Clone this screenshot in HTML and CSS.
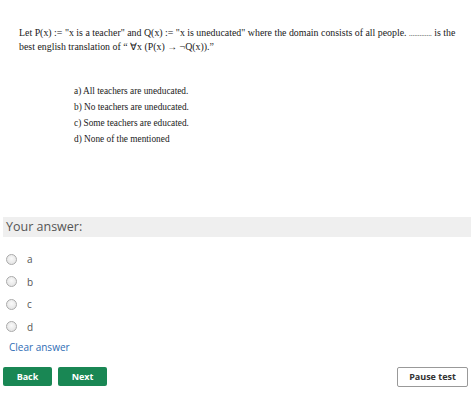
FILE: index.html
```html
<!DOCTYPE html>
<html>
<head>
<meta charset="utf-8">
<link rel="stylesheet" href="styles.css">
</head>
<body>
<div class="card">
  <div class="question">
    <p class="qtext">Let P(x) := "x is a teacher" and Q(x) := "x is uneducated" where the domain consists of all people. <span class="blank">.............</span> is the best english translation of “ ∀x (P(x) → ¬Q(x)).”</p>
    <ul class="choices">
      <li>a) All teachers are uneducated.</li>
      <li>b) No teachers are uneducated.</li>
      <li>c) Some teachers are educated.</li>
      <li>d) None of the mentioned</li>
    </ul>
  </div>
  <div class="answer-head">Your answer:</div>
  <div class="options">
    <label class="opt"><span class="radio"></span><span class="lbl">a</span></label>
    <label class="opt"><span class="radio"></span><span class="lbl">b</span></label>
    <label class="opt"><span class="radio"></span><span class="lbl">c</span></label>
    <label class="opt"><span class="radio"></span><span class="lbl">d</span></label>
  </div>
  <a class="clear">Clear answer</a>
  <div class="actions">
    <div class="left">
      <button class="btn green">Back</button>
      <button class="btn green">Next</button>
    </div>
    <button class="btn outline">Pause test</button>
  </div>
</div>
</body>
</html>
```
FILE: styles.css
```css
html, body {
  margin: 0;
  padding: 0;
  background: #ffffff;
}
body {
  font-family: "Open Sans", sans-serif;
}
.card {
  width: 474px;
  height: 405px;
  box-sizing: border-box;
  padding: 0 3px;
  box-shadow: 0 2px 3px rgba(0,0,0,0.12);
}
.question {
  padding: 26px 0 0 16px;
  height: 191px;
  box-sizing: border-box;
}
.qtext {
  margin: 0;
  font-family: "Liberation Serif", serif;
  font-size: 9.9px;
  line-height: 14px;
  color: #1a1a1a;
}
.blank {
  font-size: 7px;
  line-height: 1;
}
.choices {
  list-style: none;
  margin: 29px 0 0 55px;
  padding: 0;
  font-family: "Liberation Serif", serif;
  font-size: 9.3px;
  line-height: 16px;
  color: #1a1a1a;
}
.answer-head {
  margin-top: 26px;
  height: 20px;
  background: #efefef;
  font-size: 12.5px;
  line-height: 20px;
  color: #555;
  padding-left: 3px;
}
.options {
  margin-top: 17px;
  display: flex;
  flex-direction: column;
  gap: 12.5px;
}
.opt {
  display: flex;
  align-items: center;
  height: 10px;
  font-size: 10px;
  color: #555;
}
.radio {
  width: 9px;
  height: 9px;
  border: 1px solid #aaa;
  border-radius: 50%;
  background: radial-gradient(circle at 50% 40%, #fafafa, #dedede);
  margin-left: 3px;
  margin-right: 10px;
}
.clear {
  display: block;
  margin-top: 8px;
  margin-left: 6px;
  font-size: 10px;
  color: #2f6db5;
}
.actions {
  margin-top: 13px;
  display: flex;
  justify-content: space-between;
  padding-right: 3px;
}
.left {
  display: flex;
  gap: 6px;
}
.btn {
  font-family: "Open Sans", sans-serif;
  font-weight: bold;
  font-size: 9px;
  height: 19px;
  border-radius: 2px;
  padding: 0;
  cursor: pointer;
}
.green {
  width: 49px;
  background: #198754;
  color: #fff;
  border: none;
}
.outline {
  width: 71px;
  height: 20px;
  background: #fff;
  color: #333;
  border: 1px solid #999;
}
```
